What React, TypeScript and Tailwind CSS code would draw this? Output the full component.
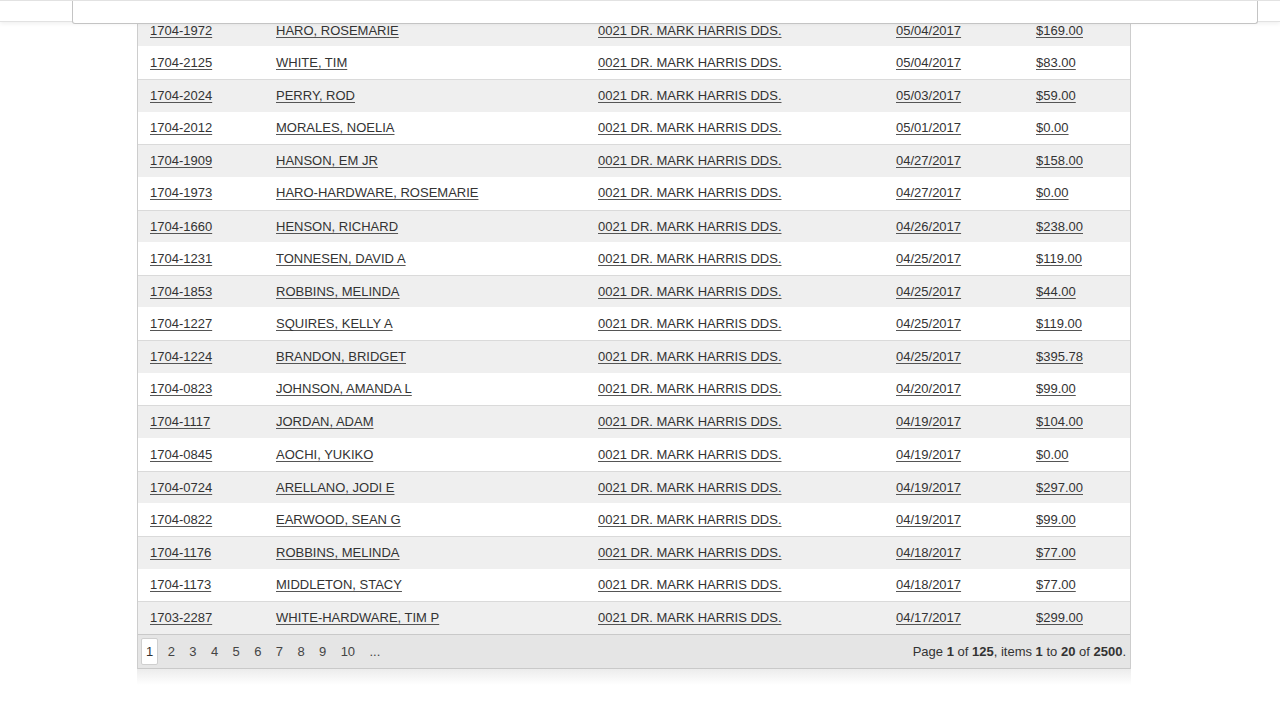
import React from "react";

type Row = { id: string; name: string; date: string; amount: string };

const rows: Row[] = [
  { id: "1704-1972", name: "HARO, ROSEMARIE", date: "05/04/2017", amount: "$169.00" },
  { id: "1704-2125", name: "WHITE, TIM", date: "05/04/2017", amount: "$83.00" },
  { id: "1704-2024", name: "PERRY, ROD", date: "05/03/2017", amount: "$59.00" },
  { id: "1704-2012", name: "MORALES, NOELIA", date: "05/01/2017", amount: "$0.00" },
  { id: "1704-1909", name: "HANSON, EM JR", date: "04/27/2017", amount: "$158.00" },
  { id: "1704-1973", name: "HARO-HARDWARE, ROSEMARIE", date: "04/27/2017", amount: "$0.00" },
  { id: "1704-1660", name: "HENSON, RICHARD", date: "04/26/2017", amount: "$238.00" },
  { id: "1704-1231", name: "TONNESEN, DAVID A", date: "04/25/2017", amount: "$119.00" },
  { id: "1704-1853", name: "ROBBINS, MELINDA", date: "04/25/2017", amount: "$44.00" },
  { id: "1704-1227", name: "SQUIRES, KELLY A", date: "04/25/2017", amount: "$119.00" },
  { id: "1704-1224", name: "BRANDON, BRIDGET", date: "04/25/2017", amount: "$395.78" },
  { id: "1704-0823", name: "JOHNSON, AMANDA L", date: "04/20/2017", amount: "$99.00" },
  { id: "1704-1117", name: "JORDAN, ADAM", date: "04/19/2017", amount: "$104.00" },
  { id: "1704-0845", name: "AOCHI, YUKIKO", date: "04/19/2017", amount: "$0.00" },
  { id: "1704-0724", name: "ARELLANO, JODI E", date: "04/19/2017", amount: "$297.00" },
  { id: "1704-0822", name: "EARWOOD, SEAN G", date: "04/19/2017", amount: "$99.00" },
  { id: "1704-1176", name: "ROBBINS, MELINDA", date: "04/18/2017", amount: "$77.00" },
  { id: "1704-1173", name: "MIDDLETON, STACY", date: "04/18/2017", amount: "$77.00" },
  { id: "1703-2287", name: "WHITE-HARDWARE, TIM P", date: "04/17/2017", amount: "$299.00" },
];

const pages = ["1", "2", "3", "4", "5", "6", "7", "8", "9", "10", "..."];

const Cell = ({ children, className = "" }: { children: React.ReactNode; className?: string }) => (
  <div className={`pl-3 flex items-center ${className}`}>
    <a href="#" className="underline underline-offset-2 decoration-[#555] text-[#333]">
      {children}
    </a>
  </div>
);

export default function App() {
  return (
    <div
      className="relative w-[1280px] h-[720px] overflow-hidden bg-white text-[13px] text-[#333]"
      style={{ fontFamily: '"Liberation Sans", Arial, Helvetica, sans-serif' }}
    >
      {/* top search strip, sits over the scrolled grid */}
      <div className="absolute top-0 left-0 right-0 z-10 h-[22px] bg-white border-t border-[#e2e2e2] border-b border-[#cfcfcf] shadow-[0_2px_4px_rgba(0,0,0,0.06)]">
        <div className="absolute left-[72px] top-0 w-[1186px] h-[23px] bg-white border-b border-x border-[#c4c4c4] rounded-b-[3px]" />
      </div>

      <div className="ml-[137px] mt-[13.7px] w-[994px]">
        <div className="border-x border-[#cdcdcd]">
          {rows.map((r, i) => (
            <div
              key={r.id + i}
              className={
                i % 2 === 0
                  ? "h-[32.65px] grid grid-cols-[126px_322px_298px_140px_1fr] bg-[#efefef] border-t border-[#dadada]"
                  : "h-[32.65px] grid grid-cols-[126px_322px_298px_140px_1fr] bg-white"
              }
            >
              <Cell>{r.id}</Cell>
              <Cell>{r.name}</Cell>
              <Cell>0021 DR. MARK HARRIS DDS.</Cell>
              <Cell>{r.date}</Cell>
              <Cell>{r.amount}</Cell>
            </div>
          ))}

          {/* pager */}
          <div className="h-[35px] flex items-center justify-between bg-[#e5e5e5] border-t border-b border-[#c9c9c9] pl-[3px] pr-[4px]">
            <div className="flex items-center gap-[4.4px]">
              {pages.map((p) => (
                <span
                  key={p}
                  className={
                    p === "1"
                      ? "h-[27px] px-[4px] flex items-center justify-center bg-white border border-[#cfcfcf] rounded-[2px] text-[#333]"
                      : "h-[27px] px-[5px] flex items-center justify-center text-[#444]"
                  }
                >
                  {p}
                </span>
              ))}
            </div>
            <div className="text-[#333]">
              Page <b>1</b> of <b>125</b>, items <b>1</b> to <b>20</b> of <b>2500</b>.
            </div>
          </div>
        </div>
        <div className="h-[16px] bg-gradient-to-b from-[#ececec] to-white" />
      </div>
    </div>
  );
}
